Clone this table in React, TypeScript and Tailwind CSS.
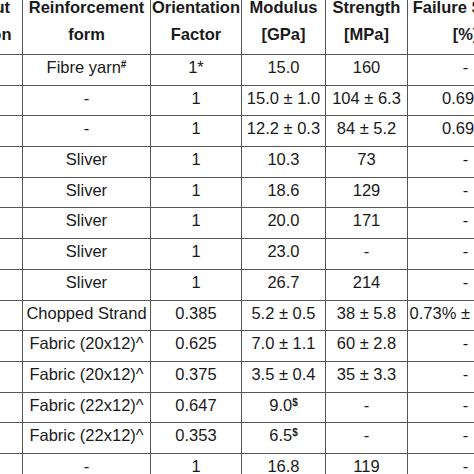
import React from "react";

type Row = {
  form: React.ReactNode;
  factor: string;
  modulus: React.ReactNode;
  strength: string;
  failure: string;
};

const rows: Row[] = [
  { form: <>Fibre yarn<sup className="text-[10px] font-bold">#</sup></>, factor: "1*", modulus: "15.0", strength: "160", failure: "-" },
  { form: "-", factor: "1", modulus: "15.0 ± 1.0", strength: "104 ± 6.3", failure: "0.69%" },
  { form: "-", factor: "1", modulus: "12.2 ± 0.3", strength: "84 ± 5.2", failure: "0.69%" },
  { form: "Sliver", factor: "1", modulus: "10.3", strength: "73", failure: "-" },
  { form: "Sliver", factor: "1", modulus: "18.6", strength: "129", failure: "-" },
  { form: "Sliver", factor: "1", modulus: "20.0", strength: "171", failure: "-" },
  { form: "Sliver", factor: "1", modulus: "23.0", strength: "-", failure: "-" },
  { form: "Sliver", factor: "1", modulus: "26.7", strength: "214", failure: "-" },
  { form: "Chopped Strand", factor: "0.385", modulus: "5.2 ± 0.5", strength: "38 ± 5.8", failure: "0.73% ± 0.15%" },
  { form: "Fabric (20x12)^", factor: "0.625", modulus: "7.0 ± 1.1", strength: "60 ± 2.8", failure: "-" },
  { form: "Fabric (20x12)^", factor: "0.375", modulus: "3.5 ± 0.4", strength: "35 ± 3.3", failure: "-" },
  { form: "Fabric (22x12)^", factor: "0.647", modulus: <>9.0<sup className="text-[10px] font-bold">$</sup></>, strength: "-", failure: "-" },
  { form: "Fabric (22x12)^", factor: "0.353", modulus: <>6.5<sup className="text-[10px] font-bold">$</sup></>, strength: "-", failure: "-" },
  { form: "-", factor: "1", modulus: "16.8", strength: "119", failure: "-" },
];

const th = "border border-[#555] font-bold text-center align-top leading-[27px] pb-[6px] px-0 whitespace-nowrap";
const td = "border border-[#555] text-center align-top h-[30.7px] pt-[2px] leading-[20px] px-0 whitespace-nowrap";

export default function App() {
  return (
    <div className="w-[474px] h-[474px] overflow-hidden bg-white text-[#1a1a1a] font-['Liberation_Sans',Arial,sans-serif] text-[16.5px]">
      <table className="table-fixed border-collapse ml-[-88px] mt-[-7px] w-[609px]">
        <colgroup>
          <col className="w-[110px]" />
          <col className="w-[128px]" />
          <col className="w-[91px]" />
          <col className="w-[84px]" />
          <col className="w-[82px]" />
          <col className="w-[116px]" />
        </colgroup>
        <thead>
          <tr>
            <th className={th}>Fibre Input<br />Orientation</th>
            <th className={th}>Reinforcement<br />form</th>
            <th className={th}>Orientation<br />Factor</th>
            <th className={th}>Modulus<br />[GPa]</th>
            <th className={th}>Strength<br />[MPa]</th>
            <th className={th}>Failure Strain<br />[%]</th>
          </tr>
        </thead>
        <tbody>
          {rows.map((r, i) => (
            <tr key={i}>
              <td className={td}></td>
              <td className={td}>{r.form}</td>
              <td className={td}>{r.factor}</td>
              <td className={td}>{r.modulus}</td>
              <td className={td}>{r.strength}</td>
              <td className={td}>{r.failure}</td>
            </tr>
          ))}
        </tbody>
      </table>
    </div>
  );
}
